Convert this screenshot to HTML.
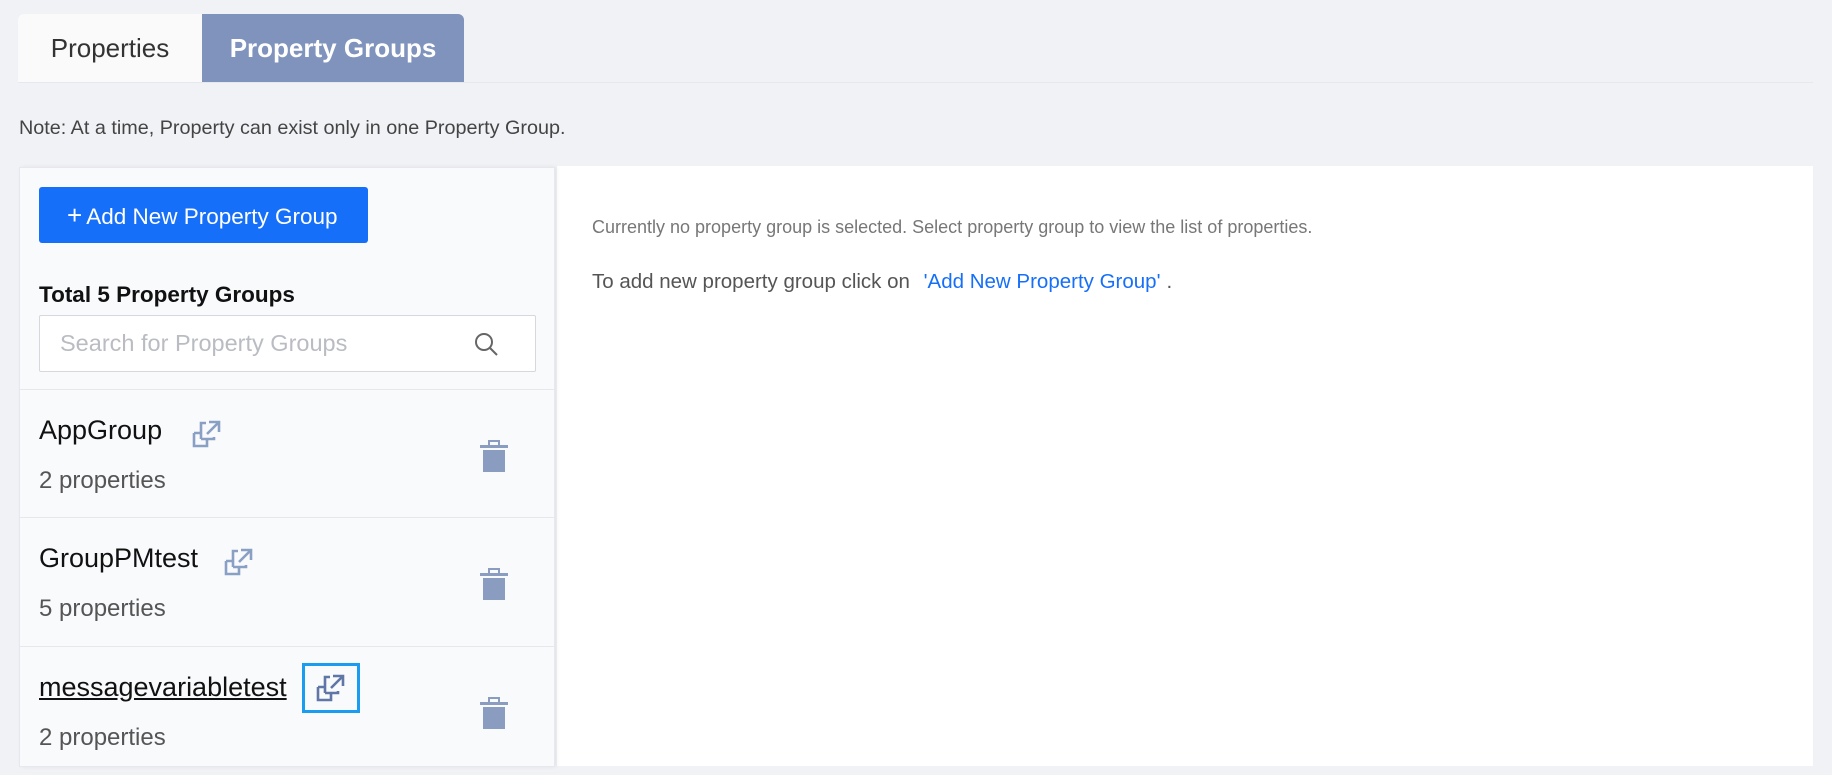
<!DOCTYPE html>
<html><head><meta charset="utf-8"><style>
*{box-sizing:border-box;margin:0;padding:0}
body{width:1832px;height:762px;background:#f1f2f6;font-family:"Liberation Sans",sans-serif;position:relative;overflow:hidden}
.abs{position:absolute}
.tab1{left:18px;top:14px;width:184px;height:68px;background:#fafafa;border-radius:6px 0 0 0;color:#333;font-size:26px;line-height:68px;text-align:center}
.tab2{left:202px;top:14px;width:262px;height:68px;background:#7f93bd;border-radius:0 6px 0 0;color:#fff;font-size:26px;font-weight:bold;line-height:68px;text-align:center}
.tabline{left:18px;top:82px;width:1795px;height:1px;background:#e6e8ee}
.note{left:19px;top:117px;font-size:19.8px;color:#444}
.left{left:19px;top:167px;width:536px;height:600px;background:#f9fafc;border:1px solid #e6e8ee;box-shadow:2px 0 4px rgba(0,0,0,.06)}
.right{left:557px;top:166px;width:1256px;height:600px;background:#fff}
.btn{left:39px;top:187px;width:329px;height:56px;background:#166ff9;border-radius:3px;color:#fff;font-size:22.5px;line-height:56px;padding-left:28px}
.total{left:39px;top:282px;font-size:22.5px;font-weight:bold;color:#111}
.search{left:39px;top:315px;width:497px;height:57px;background:#fff;border:1px solid #d6d8dd;border-radius:2px;font-size:23.5px;color:#b9bcc2;line-height:55px;padding-left:20px}
.item{left:20px;width:534px;height:129px;border-top:1px solid #e6e8ee}
.title{left:19px;font-size:27px;color:#111}
.sub{left:19px;font-size:24px;color:#555}
.t1{left:592px;top:217px;font-size:18px;color:#777}
.t2{left:592px;top:270px;font-size:20.5px;color:#555}
.t2 a{color:#166ff9;text-decoration:none;margin-left:8px;margin-right:6px}
</style></head><body>
<div class="abs tab1">Properties</div>
<div class="abs tab2">Property Groups</div>
<div class="abs tabline"></div>
<div class="abs note">Note: At a time, Property can exist only in one Property Group.</div>
<div class="abs right"></div>
<div class="abs left"></div>
<div class="abs btn"><span style="font-weight:300;font-size:26px;margin-right:4px">+</span>Add New Property Group</div>
<div class="abs total">Total 5 Property Groups</div>
<div class="abs search">Search for Property Groups
<svg class="abs" style="left:434px;top:16px" width="26" height="26" viewBox="0 0 26 26"><circle cx="10" cy="10" r="8" fill="none" stroke="#666" stroke-width="2"/><path d="M16 16L23 23" stroke="#666" stroke-width="2"/></svg></div>

<svg width="0" height="0" style="position:absolute"><defs><g id="ext"><path d="M2 14V27H15V20M2 14H9M9 20V4H14M22 18V20H15M9 20H15" fill="none" stroke-width="2.6"/><path d="M17 3H27V13M27 3L15 15" fill="none" stroke-width="2.6"/></g></defs></svg>

<div class="abs item" style="top:389px">
 <div class="abs title" style="top:25px">AppGroup</div>
 <svg class="abs" style="left:172px;top:29px" width="30" height="30" viewBox="0 0 30 30" stroke="#8a9fc4"><use href="#ext"/></svg>
 <div class="abs sub" style="top:77px">2 properties</div>
 <svg class="abs" style="left:460px;top:50px" width="28" height="32" viewBox="0 0 28 32"><rect x="9" y="1" width="10" height="5" fill="none" stroke="#8a9dc0" stroke-width="2"/><rect x="0" y="5" width="28" height="3" fill="#8a9dc0"/><rect x="3" y="10" width="22" height="22" fill="#8a9dc0"/></svg>
</div>
<div class="abs item" style="top:517px">
 <div class="abs title" style="top:25px">GroupPMtest</div>
 <svg class="abs" style="left:204px;top:29px" width="30" height="30" viewBox="0 0 30 30" stroke="#8a9fc4"><use href="#ext"/></svg>
 <div class="abs sub" style="top:77px">5 properties</div>
 <svg class="abs" style="left:460px;top:50px" width="28" height="32" viewBox="0 0 28 32"><rect x="9" y="1" width="10" height="5" fill="none" stroke="#8a9dc0" stroke-width="2"/><rect x="0" y="5" width="28" height="3" fill="#8a9dc0"/><rect x="3" y="10" width="22" height="22" fill="#8a9dc0"/></svg>
</div>
<div class="abs item" style="top:646px">
 <div class="abs title" style="top:25px;text-decoration:underline">messagevariabletest</div>
 <div class="abs" style="left:282px;top:16px;width:58px;height:50px;border:3.5px solid #1a9cf0"></div>
 <svg class="abs" style="left:296px;top:26px" width="30" height="30" viewBox="0 0 30 30" stroke="#5f76a6"><use href="#ext"/></svg>
 <div class="abs sub" style="top:77px">2 properties</div>
 <svg class="abs" style="left:460px;top:50px" width="28" height="32" viewBox="0 0 28 32"><rect x="9" y="1" width="10" height="5" fill="none" stroke="#8a9dc0" stroke-width="2"/><rect x="0" y="5" width="28" height="3" fill="#8a9dc0"/><rect x="3" y="10" width="22" height="22" fill="#8a9dc0"/></svg>
</div>

<div class="abs t1">Currently no property group is selected. Select property group to view the list of properties.</div>
<div class="abs t2">To add new property group click on <a>'Add New Property Group'</a>.</div>
</body></html>
